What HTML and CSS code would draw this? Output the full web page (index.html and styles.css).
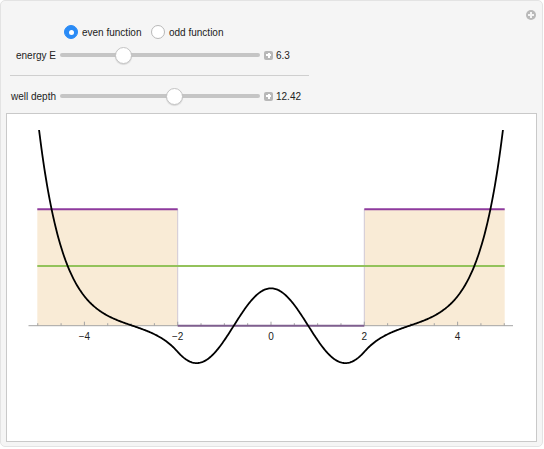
FILE: index.html
```html
<!DOCTYPE html>
<html lang="en">
  <head>
    <meta charset="UTF-8" />
    <meta name="viewport" content="width=device-width, initial-scale=1.0" />
    <title>Square well</title>
    <link rel="stylesheet" href="styles.css">
  </head>
  <body>
    <div class="panel">
      <span class="opener"></span>

      <div class="controls">
        <div class="radios">
          <label class="radio"><span class="dot on"></span>even function</label>
          <label class="radio"><span class="dot"></span>odd function</label>
        </div>

        <div class="row">
          <span class="label">energy E</span>
          <div class="track"><span class="thumb" style="left: 54.5px"></span></div>
          <span class="plus"></span>
          <span class="value">6.3</span>
        </div>

        <div class="sep"></div>

        <div class="row">
          <span class="label">well depth</span>
          <div class="track"><span class="thumb" style="left: 105.5px"></span></div>
          <span class="plus"></span>
          <span class="value">12.42</span>
        </div>
      </div>

      <div class="plot">
        <svg class="graph" width="529" height="327" viewBox="7 114 529 327">
          <defs>
            <clipPath id="clip"><rect x="0" y="130" width="544" height="400" /></clipPath>
          </defs>
          <g class="walls">
            <rect x="37.3" y="209.3" width="140.4" height="116.4" />
            <rect x="364.3" y="209.3" width="140.4" height="116.4" />
          </g>
          <line class="edge" x1="177.7" y1="209.3" x2="177.7" y2="325.7" />
          <line class="edge" x1="364.3" y1="209.3" x2="364.3" y2="325.7" />
          <line class="axis" x1="28.5" y1="325.7" x2="513" y2="325.7" />
          <g class="ticks"></g>
          <line class="energy" x1="37.3" y1="266" x2="504.7" y2="266" />
          <path class="potential" d="M37.3 209.3 H177.7 M364.3 209.3 H504.7" />
          <path class="floor" d="M177.7 325.7 H364.3" />
          <g class="labels">
            <text x="84.4" y="339.5">−4</text>
            <text x="177.7" y="339.5">−2</text>
            <text x="271" y="339.5">0</text>
            <text x="364.3" y="339.5">2</text>
            <text x="457.6" y="339.5">4</text>
          </g>
          <path class="psi" clip-path="url(#clip)" d="" />
        </svg>
      </div>
    </div>

    <script>
      let x0 = 271;
      let unit = 46.65;
      let y0 = 325.7;

      // wave function, pixels above the axis
      let a = 37.4;
      let k = 1.97;
      let kap = 1.928;
      function psi(x) {
        let s = Math.abs(x);
        if (s <= 2) return a * Math.cos(k * s);
        let t = s - 2;
        return a * (Math.cos(2 * k) * Math.cosh(kap * t) - (k / kap) * Math.sin(2 * k) * Math.sinh(kap * t));
      }

      let d = "";
      for (let x = -5; x <= 5.0001; x += 0.02) {
        let px = (x0 + x * unit).toFixed(2);
        let py = (y0 - psi(x)).toFixed(2);
        d += (d ? " L" : "M") + px + " " + py;
      }
      document.querySelector(".psi").setAttribute("d", d);

      let ticks = "";
      for (let i = -10; i <= 10; i++) {
        let px = (x0 + i * 0.5 * unit).toFixed(2);
        let len = i % 4 == 0 ? 4 : 2.5;
        ticks += '<line x1="' + px + '" y1="' + y0 + '" x2="' + px + '" y2="' + (y0 - len) + '" />';
      }
      document.querySelector(".ticks").innerHTML = ticks;
    </script>
  </body>
</html>
```

FILE: styles.css
```css
* {
  margin: 0;
  padding: 0;
  box-sizing: border-box;
}

body {
  background-color: #fff;
  font-family: "Liberation Sans", Arial, sans-serif;
  font-size: 10px;
  color: #222;
}

.panel {
  position: relative;
  width: 543px;
  height: 447px;
  background-color: #f5f5f5;
  border: 1px solid #e3e3e3;
  border-radius: 5px;
}

.opener {
  position: absolute;
  top: 9px;
  right: 6px;
  width: 10px;
  height: 10px;
  border-radius: 50%;
  background-color: #b9b9b9;
}
.opener::before,
.opener::after {
  content: "";
  position: absolute;
  background-color: #f5f5f5;
}
.opener::before {
  left: 2px;
  top: 4px;
  width: 6px;
  height: 2px;
}
.opener::after {
  left: 4px;
  top: 2px;
  width: 2px;
  height: 6px;
}

.controls {
  padding-top: 21px;
}

.radios {
  display: flex;
  align-items: center;
  height: 20px;
  margin-left: 63px;
}

.radio {
  display: flex;
  align-items: center;
  margin-right: 9.5px;
}

.dot {
  position: relative;
  width: 14px;
  height: 14px;
  margin-right: 4px;
  border-radius: 50%;
  background-color: #fff;
  border: 1px solid #b8b8b8;
}
.dot.on {
  background-color: #2a8bf6;
  border-color: #2a8bf6;
}
.dot.on::after {
  content: "";
  position: absolute;
  left: 3.5px;
  top: 3.5px;
  width: 5px;
  height: 5px;
  border-radius: 50%;
  background-color: #fff;
}

.row {
  display: flex;
  align-items: center;
  height: 20px;
  margin-top: 3px;
}
.sep + .row {
  margin-top: 10px;
}

.label {
  width: 55px;
  text-align: right;
}

.track {
  position: relative;
  width: 200px;
  height: 4px;
  margin-left: 4px;
  border-radius: 2px;
  background-color: #c5c5c5;
}

.thumb {
  position: absolute;
  top: -6.5px;
  width: 17px;
  height: 17px;
  border-radius: 50%;
  background-color: #fff;
  border: 1px solid #c4c4c4;
  box-shadow: 0 1px 1px rgba(0, 0, 0, 0.12);
}

.plus {
  position: relative;
  width: 9px;
  height: 9px;
  margin-left: 4px;
  border-radius: 2px;
  background-color: #b8b8b8;
}
.plus::before,
.plus::after {
  content: "";
  position: absolute;
  background-color: #fff;
}
.plus::before {
  left: 2px;
  top: 3.5px;
  width: 5px;
  height: 2px;
}
.plus::after {
  left: 3.5px;
  top: 2px;
  width: 2px;
  height: 5px;
}

.value {
  margin-left: 3px;
}

.sep {
  width: 299px;
  height: 1px;
  margin: 10px 0 0 9px;
  background-color: #cfcfcf;
}

.plot {
  width: 531px;
  height: 329px;
  margin: 7px 0 0 5px;
  background-color: #fff;
  border: 1px solid #c9c9c9;
}

.graph {
  display: block;
}

.walls rect {
  fill: #f9ebd6;
}

.edge {
  stroke: #cfc8d6;
  stroke-width: 1;
}

.axis {
  stroke: #a3a3a3;
  stroke-width: 1;
}

.ticks line {
  stroke: #a3a3a3;
  stroke-width: 1;
}

.energy {
  stroke: #93c25b;
  stroke-width: 2;
}

.potential {
  fill: none;
  stroke: #8e3b9e;
  stroke-width: 2;
}

.floor {
  fill: none;
  stroke: #7f5f8f;
  stroke-width: 2;
}

.labels text {
  font-family: "Liberation Sans", Arial, sans-serif;
  font-size: 10px;
  fill: #222;
  text-anchor: middle;
}

.psi {
  fill: none;
  stroke: #000;
  stroke-width: 1.8;
  stroke-linejoin: round;
}
```
